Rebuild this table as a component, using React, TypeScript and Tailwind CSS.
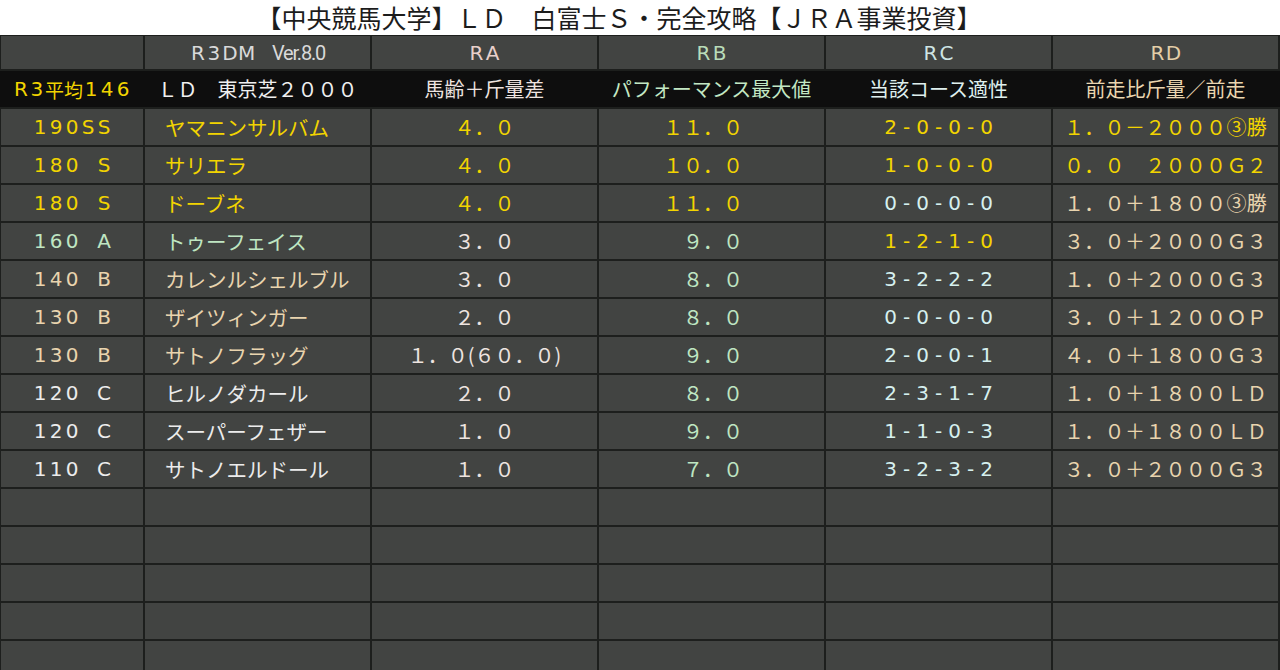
const Y = "text-[#f2d400]";
const G = "text-[#bfe6c2]";
const BE = "text-[#e9d4ae]";
const W = "text-[#ececec]";
const PK = "text-[#eee4e0]";
const CY = "text-[#d6f0ef]";

type Row = {
  score: string;
  sc: string;
  name: string;
  ra: string;
  rac: string;
  rb: string;
  rbc: string;
  rc: string;
  rcc: string;
  rd: string;
  rdc: string;
};

const rows: Row[] = [
  { score: "190SS", sc: Y, name: "ヤマニンサルバム", ra: "４．０", rac: Y, rb: "１１．０", rbc: Y, rc: "2-0-0-0", rcc: Y, rd: "１．０－２０００③勝", rdc: Y },
  { score: "180 S", sc: Y, name: "サリエラ", ra: "４．０", rac: Y, rb: "１０．０", rbc: Y, rc: "1-0-0-0", rcc: Y, rd: "０．０　２０００Ｇ２", rdc: Y },
  { score: "180 S", sc: Y, name: "ドーブネ", ra: "４．０", rac: Y, rb: "１１．０", rbc: Y, rc: "0-0-0-0", rcc: CY, rd: "１．０＋１８００③勝", rdc: BE },
  { score: "160 A", sc: G, name: "トゥーフェイス", ra: "３．０", rac: PK, rb: "９．０", rbc: G, rc: "1-2-1-0", rcc: Y, rd: "３．０＋２０００Ｇ３", rdc: BE },
  { score: "140 B", sc: BE, name: "カレンルシェルブル", ra: "３．０", rac: PK, rb: "８．０", rbc: G, rc: "3-2-2-2", rcc: CY, rd: "１．０＋２０００Ｇ３", rdc: BE },
  { score: "130 B", sc: BE, name: "ザイツィンガー", ra: "２．０", rac: PK, rb: "８．０", rbc: G, rc: "0-0-0-0", rcc: CY, rd: "３．０＋１２００ＯＰ", rdc: BE },
  { score: "130 B", sc: BE, name: "サトノフラッグ", ra: "１．０(６０．０)", rac: PK, rb: "９．０", rbc: G, rc: "2-0-0-1", rcc: CY, rd: "４．０＋１８００Ｇ３", rdc: BE },
  { score: "120 C", sc: W, name: "ヒルノダカール", ra: "２．０", rac: PK, rb: "８．０", rbc: G, rc: "2-3-1-7", rcc: CY, rd: "１．０＋１８００ＬＤ", rdc: BE },
  { score: "120 C", sc: W, name: "スーパーフェザー", ra: "１．０", rac: PK, rb: "９．０", rbc: G, rc: "1-1-0-3", rcc: CY, rd: "１．０＋１８００ＬＤ", rdc: BE },
  { score: "110 C", sc: W, name: "サトノエルドール", ra: "１．０", rac: PK, rb: "７．０", rbc: G, rc: "3-2-3-2", rcc: CY, rd: "３．０＋２０００Ｇ３", rdc: BE },
];

// halfwidth text drawn on a fixed 16px pitch, like the sheet's monospace cells
function Mono({ text }: { text: string }) {
  return (
    <span className="inline-flex font-['DejaVu_Sans',sans-serif] text-[20px]">
      {text.split("").map((c, i) => (
        <span key={i} className="inline-block w-[16px] text-center">
          {c === " " ? "\u00a0" : c}
        </span>
      ))}
    </span>
  );
}

const cell = "h-[36px] bg-[#424442] flex items-center";

export default function App() {
  return (
    <div className="w-[1280px] bg-white font-['Noto_Sans_CJK_JP',sans-serif] leading-none">
      <div className="h-[35px] flex items-center justify-center pr-[42px] text-[25px] text-[#1c1c1c]">
        【中央競馬大学】ＬＤ　白富士Ｓ・完全攻略【ＪＲＡ事業投資】
      </div>

      <div className="grid grid-cols-[142px_repeat(5,225px)] gap-[2px] bg-[#1d1f1d] pt-[1px] pl-[1px] pr-[2px]">
        {/* column header */}
        <div className="h-[33px] bg-[#424442]" />
        <div className="h-[33px] bg-[#424442] flex items-center justify-center gap-[18px] text-[#d9d9d9]">
          <Mono text="R3DM" />
          <span className="font-['Roboto',sans-serif] text-[20px] tracking-[-1.2px]">Ver.8.0</span>
        </div>
        <div className="h-[33px] bg-[#424442] flex items-center justify-center text-[#e9d0cb]">
          <Mono text="RA" />
        </div>
        <div className="h-[33px] bg-[#424442] flex items-center justify-center text-[#b9dcb9]">
          <Mono text="RB" />
        </div>
        <div className="h-[33px] bg-[#424442] flex items-center justify-center text-[#cfe5e4]">
          <Mono text="RC" />
        </div>
        <div className="h-[33px] bg-[#424442] flex items-center justify-center text-[#e4cfa8]">
          <Mono text="RD" />
        </div>

        {/* black caption row */}
        <div className="col-span-6 -ml-[1px] -mr-[2px] pl-[1px] pr-[2px] grid grid-cols-[142px_repeat(5,225px)] gap-[2px] bg-[#0e0e0e] text-[20px]">
          <div className="h-[36px] flex items-center justify-center text-[#f2d400]">
            <Mono text="R3" />
            <span className="text-[19px]">平均</span>
            <Mono text="146" />
          </div>
          <div className="h-[36px] flex items-center justify-center text-[#f0f0f0]">ＬＤ　東京芝２０００</div>
          <div className="h-[36px] flex items-center justify-center text-[#eee4e0]">馬齢＋斤量差</div>
          <div className="h-[36px] flex items-center justify-center text-[#c3e8c4]">パフォーマンス最大値</div>
          <div className="h-[36px] flex items-center justify-center text-[#dff0ee]">当該コース適性</div>
          <div className="h-[36px] flex items-center justify-center text-[#ead6b0]">前走比斤量／前走</div>
        </div>

        {rows.map((r, i) => (
          <div key={i} className="contents text-[20px]">
            <div className={`${cell} justify-center ${r.sc}`}>
              <Mono text={r.score} />
            </div>
            <div className={`${cell} pl-[20px] text-[20.5px] ${r.sc}`}>{r.name}</div>
            <div className={`${cell} justify-center ${r.rac}`}>{r.ra}</div>
            <div className={`${cell} justify-end pr-[81px] ${r.rbc}`}>{r.rb}</div>
            <div className={`${cell} justify-center ${r.rcc}`}>
              <Mono text={r.rc} />
            </div>
            <div className={`${cell} justify-center tracking-[0.3px] ${r.rdc}`}>{r.rd}</div>
          </div>
        ))}

        {Array.from({ length: 30 }).map((_, i) => (
          <div key={`e${i}`} className={cell} />
        ))}
      </div>
    </div>
  );
}
